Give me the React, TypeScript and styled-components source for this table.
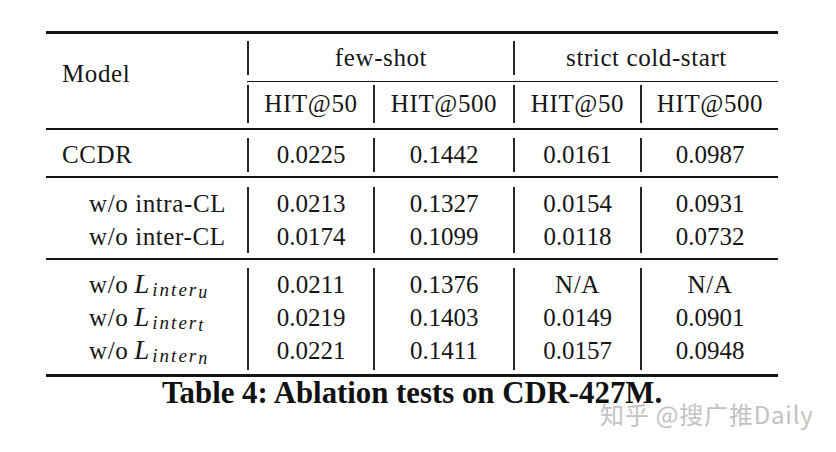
import styled, { createGlobalStyle } from 'styled-components';

const Global = createGlobalStyle`
  html, body {
    margin: 0;
    padding: 0;
    background: #fff;
  }
`;

const serif = `"Times New Roman", "Liberation Serif", "DejaVu Serif", serif`;

const Page = styled.div`
  position: relative;
  width: 836px;
  height: 452px;
  box-sizing: border-box;
  padding: 31px 0 0 46px;
  background: #fff;
  color: #161616;
  font-family: ${serif};
  font-size: 25px;
`;

const Table = styled.div`
  width: 732px;
`;

const Rule = styled.div<{ $weight: number }>`
  height: ${p => p.$weight}px;
  background: #161616;
`;

const Group = styled.div<{ $top: number; $bottom: number }>`
  padding: ${p => p.$top}px 0 ${p => p.$bottom}px;
`;

const cols = '201px 126px 140px 127px 138px';

const Row = styled.div<{ $tall?: boolean }>`
  display: grid;
  grid-template-columns: ${cols};
  height: ${p => (p.$tall ? 34 : 33)}px;
  line-height: ${p => (p.$tall ? 34 : 33)}px;
`;

// word labels are set a little looser than the digits, like the paper's face
const NameCell = styled.div<{ $indent?: boolean }>`
  padding-left: ${p => (p.$indent ? 43 : 16)}px;
  letter-spacing: 0.6px;
  white-space: nowrap;
`;

const Cell = styled.div<{ $label?: boolean }>`
  border-left: 2px solid #262626;
  text-align: center;
  white-space: nowrap;
  letter-spacing: ${p => (p.$label ? 0.6 : 0)}px;
`;

/* header: "Model" on the left, two header rows on the right */
const Header = styled.div`
  display: flex;
`;

const ModelHead = styled.div`
  width: 201px;
  box-sizing: border-box;
  padding: 16px 0 0 16px;
  line-height: 33px;
  letter-spacing: 0.6px;
`;

const HeadRight = styled.div`
  width: 531px;
  display: flex;
  flex-direction: column;
`;

const SpanRow = styled.div`
  display: grid;
  grid-template-columns: 266px 265px;
  height: 34px;
  line-height: 34px;
`;

const PartialRule = styled.div`
  height: 1px;
  background: #161616;
  margin: 6px 0 3px;
`;

const SubRow = styled.div`
  display: grid;
  grid-template-columns: 126px 140px 127px 138px;
  height: 38px;
  line-height: 38px;
`;

const MathL = styled.span`
  font-style: italic;
  font-size: 27px;
  margin: 0 3px 0 6px;
  letter-spacing: 0;
`;

const Sub = styled.span`
  font-style: italic;
  font-size: 19px;
  letter-spacing: 2px;
  position: relative;
  top: 3px;
`;

const SubSub = styled.span`
  font-style: italic;
  font-size: 18px;
  position: relative;
  top: 5px;
`;

const Caption = styled.div`
  width: 732px;
  margin-top: 5px;
  text-align: center;
  font-weight: bold;
  font-size: 30.8px;
  line-height: 22px;
  color: #111;
`;

const Watermark = styled.div`
  position: absolute;
  left: 600px;
  top: 404px;
  font-family: "Noto Sans CJK SC", "Noto Sans", sans-serif;
  font-size: 24px;
  line-height: 20px;
  letter-spacing: 0.8px;
  color: #c2c2c2;
  white-space: nowrap;
`;

type Entry = { name: React.ReactNode; values: string[] };

const lossName = (s: string) => (
  <>
    w/o<MathL>L</MathL>
    <Sub>inter</Sub>
    <SubSub>{s}</SubSub>
  </>
);

const groups: Entry[][] = [
  [{ name: 'CCDR', values: ['0.0225', '0.1442', '0.0161', '0.0987'] }],
  [
    { name: 'w/o intra-CL', values: ['0.0213', '0.1327', '0.0154', '0.0931'] },
    { name: 'w/o inter-CL', values: ['0.0174', '0.1099', '0.0118', '0.0732'] },
  ],
  [
    { name: lossName('u'), values: ['0.0211', '0.1376', 'N/A', 'N/A'] },
    { name: lossName('t'), values: ['0.0219', '0.1403', '0.0149', '0.0901'] },
    { name: lossName('n'), values: ['0.0221', '0.1411', '0.0157', '0.0948'] },
  ],
];

const pads = [
  [8, 4],
  [9, 5],
  [8, 7],
];

export default function App() {
  return (
    <Page>
      <Global />
      <Table>
        <Rule $weight={3} />
        <Group $top={7} $bottom={5}>
          <Header>
            <ModelHead>Model</ModelHead>
            <HeadRight>
              <SpanRow>
                <Cell $label>few-shot</Cell>
                <Cell $label>strict cold-start</Cell>
              </SpanRow>
              <PartialRule />
              <SubRow>
                <Cell $label>HIT@50</Cell>
                <Cell $label>HIT@500</Cell>
                <Cell $label>HIT@50</Cell>
                <Cell $label>HIT@500</Cell>
              </SubRow>
            </HeadRight>
          </Header>
        </Group>
        {groups.map((rows, gi) => (
          <div key={gi}>
            <Rule $weight={2} />
            <Group $top={pads[gi][0]} $bottom={pads[gi][1]}>
              {rows.map((r, ri) => (
                <Row key={ri} $tall={gi === 0}>
                  <NameCell $indent={gi > 0}>{r.name}</NameCell>
                  {r.values.map((v, vi) => (
                    <Cell key={vi} $label={v === 'N/A'}>{v}</Cell>
                  ))}
                </Row>
              ))}
            </Group>
          </div>
        ))}
        <Rule $weight={3} />
      </Table>
      <Caption>Table 4: Ablation tests on CDR-427M.</Caption>
      <Watermark>知乎 @搜广推Daily</Watermark>
    </Page>
  );
}
